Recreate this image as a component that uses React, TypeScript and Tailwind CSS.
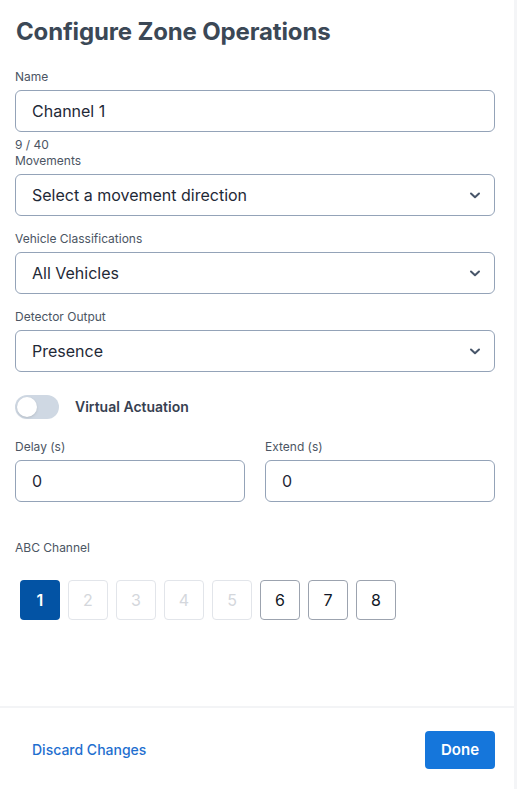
import React, { useState } from 'react';

const font = { fontFamily: 'Inter, "Noto Sans", sans-serif' };

const Chevron: React.FC = () => (
  <svg width="12" height="12" viewBox="0 0 12 12" className="text-[#475569]">
    <path d="M2 4.5 6 8.2l4-3.7" fill="none" stroke="currentColor" strokeWidth="2" strokeLinecap="round" strokeLinejoin="round" />
  </svg>
);

const Label: React.FC<{ children: React.ReactNode }> = ({ children }) => (
  <div className="text-xs leading-4 text-[#4b5563] mb-[5px]">{children}</div>
);

const SelectBox: React.FC<{ value: string }> = ({ value }) => (
  <div className="h-[42px] w-full rounded-md border border-[#94a3b8] bg-white flex items-center justify-between pl-4 pr-[13px]">
    <span className="text-base text-[#1f2937]">{value}</span>
    <Chevron />
  </div>
);

const TextBox: React.FC<{ value: string }> = ({ value }) => (
  <div className="h-[42px] w-full rounded-md border border-[#94a3b8] bg-white flex items-center px-4">
    <span className="text-base text-[#1f2937]">{value}</span>
  </div>
);

const App: React.FC = () => {
  const [channel, setChannel] = useState(1);
  const disabled = [2, 3, 4, 5];

  return (
    <div className="h-screen w-full flex bg-white" style={font}>
      <div className="flex-1 flex flex-col">
        {/* Form body */}
        <div className="flex-1 pl-[15px] pr-[19px] pt-4">
          <h1 className="text-2xl leading-8 font-bold tracking-[-0.15px] text-[#3b4856] pl-px">Configure Zone Operations</h1>

          <div className="mt-[21px]">
            <Label>Name</Label>
            <TextBox value="Channel 1" />
            <div className="text-xs leading-4 text-[#4b5563] mt-[5px]">9 / 40</div>
            <Label>Movements</Label>
            <SelectBox value="Select a movement direction" />
          </div>

          <div className="mt-[15px]">
            <Label>Vehicle Classifications</Label>
            <SelectBox value="All Vehicles" />
          </div>

          <div className="mt-[15px]">
            <Label>Detector Output</Label>
            <SelectBox value="Presence" />
          </div>

          {/* Virtual actuation switch */}
          <div className="mt-[23px] flex items-center gap-4">
            <div className="w-11 h-6 rounded-full bg-[#cfd8e3] p-[2px] flex items-center">
              <div className="w-5 h-5 rounded-full bg-white shadow-sm" />
            </div>
            <span className="text-sm font-semibold text-[#374151]">Virtual Actuation</span>
          </div>

          <div className="mt-5 grid grid-cols-2 gap-5">
            <div>
              <Label>Delay (s)</Label>
              <TextBox value="0" />
            </div>
            <div>
              <Label>Extend (s)</Label>
              <TextBox value="0" />
            </div>
          </div>

          <div className="mt-[38px]">
            <div className="text-xs leading-4 text-[#4b5563]">ABC Channel</div>
            <div className="mt-6 pl-[5px] flex gap-2">
              {[1, 2, 3, 4, 5, 6, 7, 8].map((n) => {
                const off = disabled.includes(n);
                const active = n === channel;
                return (
                  <button
                    key={n}
                    disabled={off}
                    onClick={() => setChannel(n)}
                    className={
                      active
                        ? 'w-10 h-10 rounded bg-[#0353a4] text-white text-base font-semibold'
                        : off
                        ? 'w-10 h-10 rounded border border-[#e2e5ea] text-[#d4d7dc] text-base'
                        : 'w-10 h-10 rounded border border-[#9ca3af] text-[#111827] text-base'
                    }
                  >
                    {n}
                  </button>
                );
              })}
            </div>
          </div>
        </div>

        {/* Footer actions */}
        <div className="h-[83px] border-t-2 border-[#f3f4f6] flex items-center justify-between pl-8 pr-[19px] pt-[3px]">
          <button className="text-sm font-medium text-[#1f6fcf]">Discard Changes</button>
          <button className="h-[38px] px-4 rounded bg-[#1576db] text-white text-[15px] font-semibold">Done</button>
        </div>
      </div>
      <div className="w-[3px] bg-[#f4f5f7]" />
    </div>
  );
};

export default App;
